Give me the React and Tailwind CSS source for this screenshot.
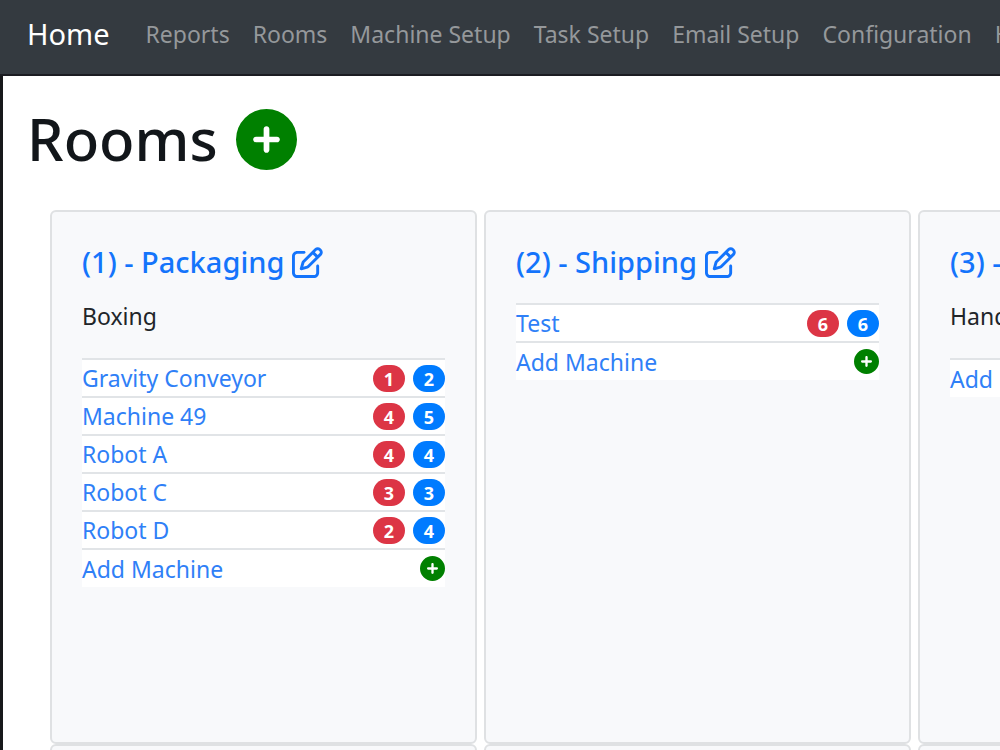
import React from "react";
import { FaCirclePlus, FaRegPenToSquare } from "react-icons/fa6";

const navItems = [
  "Reports",
  "Rooms",
  "Machine Setup",
  "Task Setup",
  "Email Setup",
  "Configuration",
  "Help",
];

const rooms = [
  {
    id: 1,
    name: "Packaging",
    description: "Boxing",
    machines: [
      { name: "Gravity Conveyor", overdue: 1, total: 2 },
      { name: "Machine 49", overdue: 4, total: 5 },
      { name: "Robot A", overdue: 4, total: 4 },
      { name: "Robot C", overdue: 3, total: 3 },
      { name: "Robot D", overdue: 2, total: 4 },
    ],
  },
  {
    id: 2,
    name: "Shipping",
    machines: [{ name: "Test", overdue: 6, total: 6 }],
  },
  { id: 3, name: "Hand", description: "Hand", machines: [] },
];

function Navbar() {
  return (
    <nav className="flex h-[76px] items-center overflow-hidden border-b-2 border-[#1b1c22] bg-[#343a40] pb-1.5 pl-[27px] whitespace-nowrap">
      <a href="#home" className="mr-9 text-[29px] leading-10 text-white">
        Home
      </a>
      <ul className="flex gap-[23px] text-[23px] leading-10 text-[#95989b]">
        {navItems.map((item) => (
          <li key={item}>
            <a href="#nav">{item}</a>
          </li>
        ))}
      </ul>
    </nav>
  );
}

function Badge({ value, className }) {
  return (
    <span
      className={`inline-flex h-[27px] w-8 items-center justify-center rounded-full text-[18px] leading-none font-bold text-white ${className}`}
    >
      {value}
    </span>
  );
}

function RoomCard({ room }) {
  return (
    <section className="min-h-[534px] w-[427px] shrink-0 rounded-md border-2 border-[#dfe1e3] bg-[#f8f9fb] px-[30px] pt-[30px]">
      <h2 className="text-[29px] leading-10 font-medium whitespace-nowrap text-[#1474fb]">
        <a href="#room" className="flex items-center gap-2">
          ({room.id}) - {room.name}
          <FaRegPenToSquare className="size-[31px] shrink-0" />
        </a>
      </h2>
      {room.description && (
        <p className="mt-4 text-[23px] leading-9 text-[#212529]">
          {room.description}
        </p>
      )}
      <table
        className={`w-full border-collapse bg-white text-[23px] leading-9 text-[#2f80f7] ${
          room.description ? "mt-6" : "mt-[21px]"
        }`}
      >
        <tbody>
          {room.machines.map((machine) => (
            <tr key={machine.name} className="h-[38px] border-t-2 border-[#e1e4e7]">
              <td className="p-0">
                <a href="#machine">{machine.name}</a>
              </td>
              <td className="p-0">
                <div className="flex items-center justify-end gap-2 pt-px">
                  <Badge value={machine.overdue} className="bg-[#dc3545]" />
                  <Badge value={machine.total} className="bg-[#007bff]" />
                </div>
              </td>
            </tr>
          ))}
          <tr className="h-[38px] border-t-2 border-[#e1e4e7]">
            <td className="p-0">
              <a href="#add-machine">Add Machine</a>
            </td>
            <td className="p-0">
              <button
                type="button"
                aria-label="Add machine"
                className="ml-auto block text-[#008000]"
              >
                <FaCirclePlus className="size-[25px]" />
              </button>
            </td>
          </tr>
        </tbody>
      </table>
    </section>
  );
}

function EmptyCard() {
  return (
    <section className="min-h-[534px] w-[427px] shrink-0 rounded-md border-2 border-[#dfe1e3] bg-[#f8f9fb]" />
  );
}

export default function App() {
  return (
    <div className="flex h-screen flex-col overflow-hidden bg-white font-['Noto_Sans','Open_Sans',sans-serif]">
      <Navbar />
      <main className="flex-1 overflow-hidden border-l-[3px] border-[#17181b]">
        <header className="flex items-center gap-[18px] pt-6 pl-6">
          <h1 className="text-[58px] leading-[78px] font-medium text-[#12161a]">
            Rooms
          </h1>
          <button type="button" aria-label="Add room" className="text-[#008000]">
            <FaCirclePlus className="size-[61px]" />
          </button>
        </header>
        <div className="mt-8 pl-[47px]">
          <div className="flex gap-[7px]">
            {rooms.map((room) => (
              <RoomCard key={room.id} room={room} />
            ))}
          </div>
          <div className="flex gap-[7px]">
            {rooms.map((room) => (
              <EmptyCard key={room.id} />
            ))}
          </div>
        </div>
      </main>
    </div>
  );
}
